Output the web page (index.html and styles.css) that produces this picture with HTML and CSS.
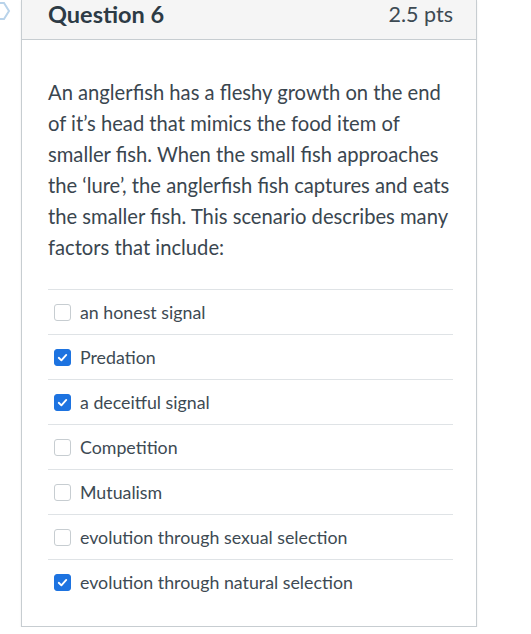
FILE: index.html
```html
<!DOCTYPE html>
<html>
<head>
<meta charset="utf-8">
<link rel="stylesheet" href="styles.css">
</head>
<body>
<div class="page">
  <svg class="flag" width="12" height="22" viewBox="0 0 12 22"><path d="M-6 3 L4 3 L9 11 L4 19 L-6 19" fill="none" stroke="#b9d3ea" stroke-width="2"/></svg>
  <div class="card">
    <div class="header">
      <span class="title">Question 6</span>
      <span class="pts">2.5 pts</span>
    </div>
    <div class="body">
      <p class="text">An anglerfish has a fleshy growth on the end of it’s head that mimics the food item of smaller fish. When the small fish approaches the ‘lure’, the anglerfish fish captures and eats the smaller fish. This scenario describes many factors that include:</p>
      <div class="answers">
        <div class="answer"><span class="box"></span><span class="label">an honest signal</span></div>
        <div class="answer"><span class="box checked"><svg viewBox="0 0 16 16" width="16" height="16"><path d="M4 8.3 L6.8 11 L12 5.2" fill="none" stroke="#fff" stroke-width="2" stroke-linecap="round" stroke-linejoin="round"/></svg></span><span class="label">Predation</span></div>
        <div class="answer"><span class="box checked"><svg viewBox="0 0 16 16" width="16" height="16"><path d="M4 8.3 L6.8 11 L12 5.2" fill="none" stroke="#fff" stroke-width="2" stroke-linecap="round" stroke-linejoin="round"/></svg></span><span class="label">a deceitful signal</span></div>
        <div class="answer"><span class="box"></span><span class="label">Competition</span></div>
        <div class="answer"><span class="box"></span><span class="label">Mutualism</span></div>
        <div class="answer"><span class="box"></span><span class="label">evolution through sexual selection</span></div>
        <div class="answer"><span class="box checked"><svg viewBox="0 0 16 16" width="16" height="16"><path d="M4 8.3 L6.8 11 L12 5.2" fill="none" stroke="#fff" stroke-width="2" stroke-linecap="round" stroke-linejoin="round"/></svg></span><span class="label">evolution through natural selection</span></div>
      </div>
    </div>
  </div>
</div>
</body>
</html>
```

FILE: styles.css
```css
html, body {
  margin: 0;
  padding: 0;
  background: #fff;
}
body {
  font-family: Lato, "Open Sans", sans-serif;
  color: #2d3b45;
}
.page {
  position: relative;
  padding-left: 21px;
}
.flag {
  position: absolute;
  left: 0;
  top: 0;
}
.card {
  width: 454px;
  border: 1px solid #c7cdd1;
  border-top: none;
  box-shadow: 0 1px 2px rgba(0,0,0,0.08);
}
.header {
  display: flex;
  justify-content: space-between;
  align-items: center;
  height: 40px;
  box-sizing: border-box;
  padding: 0 23px 12px 26px;
  background: #f5f5f5;
  border-bottom: 1px solid #c7cdd1;
}
.title {
  font-size: 23.5px;
  font-weight: 700;
  line-height: 28px;
}
.pts {
  font-size: 21.5px;
  line-height: 28px;
  color: #3d4a53;
}
.body {
  padding: 37px 23px 22px 26px;
}
.text {
  margin: 0 0 26px 0;
  font-size: 20.2px;
  line-height: 31px;
  color: #3a464f;
}
.answer {
  display: flex;
  align-items: center;
  height: 44px;
  border-top: 1px solid #dfe3e6;
}
.box {
  width: 15px;
  height: 15px;
  border: 1px solid #c7cdd1;
  border-radius: 3px;
  margin-left: 6px;
  margin-right: 9px;
  display: flex;
  align-items: center;
  justify-content: center;
  flex-shrink: 0;
}
.box.checked {
  background: #1d73e0;
  border-color: #1d73e0;
}
.box svg {
  width: 15px;
  height: 15px;
}
.label {
  font-size: 17.8px;
  color: #3d4a53;
}
```
